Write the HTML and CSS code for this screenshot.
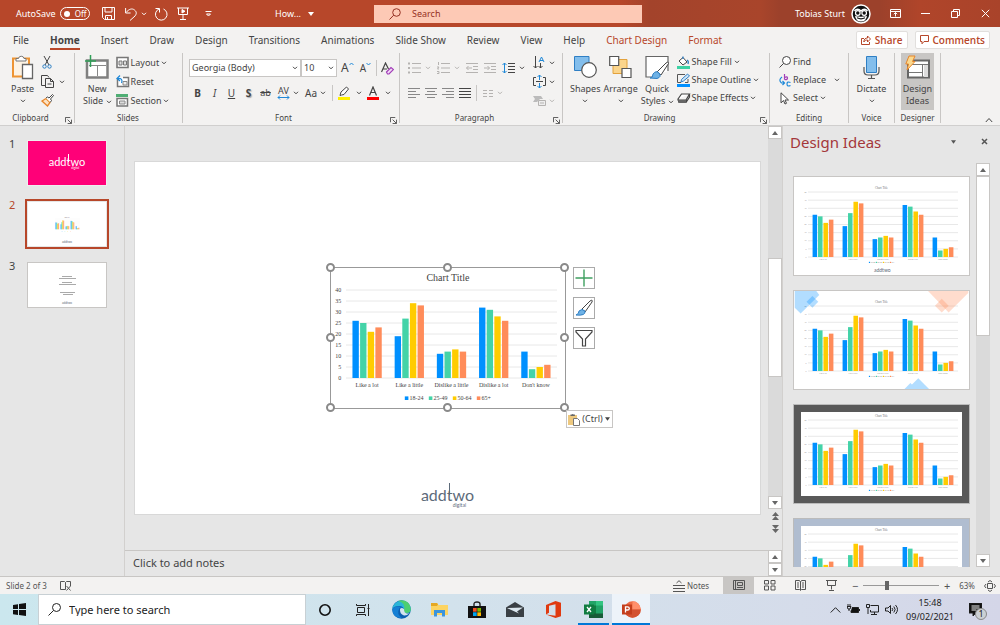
FILE: index.html
```html
<!doctype html>
<html lang="en">
<head>
<meta charset="utf-8">
<title>How... - PowerPoint</title>
<link rel="stylesheet" href="styles.css">
</head>
<body>

<!-- shared icons -->
<svg class="defs" width="0" height="0">
    <symbol id="chev" viewBox="0 0 6 4"><path d="M1 .8 3 2.8 5 .8" fill="none" stroke="currentColor"/></symbol>
    <symbol id="launch" viewBox="0 0 8 8"><path d="M.5 6V.5H6M3 3l4 4M7.5 3v4.5H3" fill="none" stroke="currentColor"/></symbol>
    <symbol id="up" viewBox="0 0 6 4"><path d="M0 4 3 0l3 4z" fill="currentColor"/></symbol>
    <symbol id="down" viewBox="0 0 6 4"><path d="M0 0h6L3 4z" fill="currentColor"/></symbol>
</svg>

<header class="titlebar">
    <div class="quick">
        <label class="autosave" for="autosave">AutoSave <input type="checkbox" id="autosave" role="switch"><span class="toggle">Off</span></label>
        <button class="save" aria-label="Save"><svg width="13" height="13" viewBox="0 0 13 13"><path d="M.5.5h12v12h-10l-2-2zM3 .5V5h7V.5M3.5 12.5v-4h6v4M5.5 10v2"/></svg></button>
        <button class="undo" aria-label="Undo"><svg width="12" height="14" viewBox="0 0 12 14"><path d="M.6 1v5h5M1 5.5C4 2 7 1 9.5 3s2 4 .5 6l-5 4.5"/></svg></button>
        <button class="undo-more" aria-label="Undo list"><svg width="6" height="4"><use href="#chev"/></svg></button>
        <button class="redo" aria-label="Redo"><svg width="14" height="14" viewBox="0 0 14 14"><path d="M1.5 1.5h4v4M5 2A5.8 5.8 0 1 0 9.5 2"/></svg></button>
        <button class="present" aria-label="Start slide show"><svg width="12" height="13" viewBox="0 0 12 13"><path d="M0 1h12M1.5 1v6.5h9V1M6 7.5V12M3 12.5h6"/><path d="M5 2.5 8 4.3 5 6z" fill="#fff"/></svg></button>
        <button class="customise" aria-label="Customise toolbar"><svg width="7" height="6" viewBox="0 0 7 6"><path d="M.5.5h6M1.500 3 3.500 5l2-2z"/></svg></button>
        <button class="filename">How... <svg width="6" height="4"><use href="#down"/></svg></button>
    </div>
    <label class="find-box" for="search">
        <svg width="12" height="12" viewBox="0 0 12 12"><circle cx="7.5" cy="4.5" r="3.8"/><path d="M4.7 7.2.5 11.5"/></svg>
        <input id="search" type="text" placeholder="Search">
    </label>
    <div class="account">
        <span class="user">Tobias Sturt</span>
        <svg class="avatar" width="20" height="20" viewBox="0 0 20 20"><circle cx="10" cy="10" r="9" fill="#111" stroke="#fff" stroke-width="1.5"/><path d="M3.500 7q3-3.500 6.500 0 3.500-3.500 6.500 0" stroke="#fff" stroke-width="1.500" fill="none"/><circle cx="6.800" cy="9" r="2.300" fill="#111" stroke="#fff" stroke-width="1.200"/><circle cx="13.200" cy="9" r="2.300" fill="#111" stroke="#fff" stroke-width="1.200"/><path d="M4 12q6 1.500 12 0-1 5.500-6 5.500T4 12" fill="#fff" stroke="none"/><path d="M6 13.800q4 2 8 0" stroke="#111" stroke-width="1.2" fill="none"/></svg>
        <div class="window-buttons">
            <button aria-label="Ribbon display"><svg width="11" height="9" viewBox="0 0 11 9"><path d="M.5.5h10v8H.5zM.5 2.5h10M5.5 7.5v-4M3.8 5.2l1.7-1.700 1.700 1.700"/></svg></button>
            <button aria-label="Minimise"><svg width="9" height="9" viewBox="0 0 9 9"><path d="M0 4.5h9"/></svg></button>
            <button aria-label="Restore"><svg width="9" height="9" viewBox="0 0 9 9"><path d="M.5 2.5h6v6h-6zM2.5 2.5v-2h6v6h-2"/></svg></button>
            <button aria-label="Close"><svg width="9" height="9" viewBox="0 0 9 9"><path d="m.8.8 7.4 7.4M8.2.8.8 8.2"/></svg></button>
        </div>
    </div>
</header>

<nav class="tabs">
    <a href="#file">File</a>
    <a href="#home" class="current">Home</a>
    <a href="#insert">Insert</a>
    <a href="#draw">Draw</a>
    <a href="#design">Design</a>
    <a href="#transitions">Transitions</a>
    <a href="#animations">Animations</a>
    <a href="#slideshow">Slide Show</a>
    <a href="#review">Review</a>
    <a href="#view">View</a>
    <a href="#help">Help</a>
    <a href="#chart-design" class="context">Chart Design</a>
    <a href="#format" class="context">Format</a>
    <div class="share">
        <button><svg width="10" height="10" viewBox="0 0 10 10"><path d="M3 3.5H.5v6h8V7M2.8 7c.2-3 1.7-4 3.7-4V1l3 3-3 3V5C5 5 3.8 5.5 2.8 7z"/></svg>Share</button>
        <button><svg width="9" height="10" viewBox="0 0 9 10"><path d="M.5.5h8v6H4L2 8.8V6.5H.5z"/></svg>Comments</button>
    </div>
</nav>

<section class="ribbon">
    <div class="group clipboard">
        <div class="tools">
            <button class="big">
                <svg width="23" height="25" viewBox="0 0 23 25"><path d="M2 3.5h16v18H2z" fill="#fdf3e4" stroke="#ee9433" stroke-width="2"/><path d="M5 6V3.5h2.5a2.8 2.8 0 0 1 5.5 0h2V6z" fill="#fff" stroke="#777"/><path d="M11.5 9.5h10v14h-10z" fill="#fff" stroke="#666" stroke-width="1.3"/></svg>
                Paste<svg width="6" height="4"><use href="#chev"/></svg>
            </button>
            <div class="stack">
                <button aria-label="Cut"><svg width="13" height="13" viewBox="0 0 13 13"><path d="M3 0l5 9M9 0 4 9" stroke="#444" fill="none"/><circle cx="3.5" cy="10.5" r="1.7" fill="none" stroke="#2b7fc4"/><circle cx="8.5" cy="10.5" r="1.7" fill="none" stroke="#2b7fc4"/></svg></button>
                <button aria-label="Copy"><svg width="13" height="13" viewBox="0 0 13 13"><path d="M4 10.5H.5V.5h6l1.5 2M4.5 3.5h5l3 3v6h-8zM9.5 3.5v3h3M6.5 9h4" stroke="#444" fill="none"/></svg><svg width="6" height="4"><use href="#chev"/></svg></button>
                <button aria-label="Format Painter"><svg width="13" height="13" viewBox="0 0 13 13"><path d="M1 7 5 4.5 9 8.5 6.5 12z" fill="#fce3c4" stroke="#e8862a" stroke-width="1.3"/><path d="m5 4 1.5-1 1.5 1L11.5.5l1 1L9.5 5l1 1.5-1.2 1.8" fill="#fff" stroke="#444"/></svg></button>
            </div>
        </div>
        <h2>Clipboard</h2><button class="launch" aria-label="Clipboard options"><svg width="7" height="7"><use href="#launch"/></svg></button>
    </div>

    <div class="group slides">
        <div class="tools">
            <button class="big">
                <svg width="24" height="25" viewBox="0 0 24 25"><path d="M2 5.5h20.5v17H2z" fill="#fff" stroke="#808080" stroke-width="2.5"/><path d="M4 10.5h17M12.5 10.5V21" stroke="#888"/><path d="M0 6h11M5.5 0v12" stroke="#2f9e57" stroke-width="1.5"/></svg>
                New<span>Slide <svg width="6" height="4"><use href="#chev"/></svg></span>
            </button>
            <div class="stack">
                <button><svg width="13" height="13" viewBox="0 0 13 13"><path d="M1 1.5h11v10H1z" fill="#fff" stroke="#777" stroke-width="1.6"/><path d="M3 5h3v4H3zM7.5 5h3v4h-3z" fill="#ddd" stroke="#777"/></svg>Layout <svg width="6" height="4"><use href="#chev"/></svg></button>
                <button><svg width="13" height="13" viewBox="0 0 13 13"><path d="M1.5 3v8.5h11v-9H7" fill="#fff" stroke="#777" stroke-width="1.5"/><path d="M7 6.5h4V10H7z" fill="#eee" stroke="#888"/><path d="M5.5 8q2-5-4-4.5M4 .5l-3 3 3 2.5" fill="none" stroke="#1e88d8" stroke-width="1.2"/></svg>Reset</button>
                <button><svg width="13" height="13" viewBox="0 0 13 13"><path d="M0 0h12v3H0z" fill="#4fae74"/><path d="M1 4.5h10.5V12H1z" fill="#fff" stroke="#777" stroke-width="1.5"/><path d="M3.5 7h5.5v3H3.5z" fill="#ddd" stroke="#888"/></svg>Section <svg width="6" height="4"><use href="#chev"/></svg></button>
            </div>
        </div>
        <h2>Slides</h2>
    </div>

    <div class="group font">
        <div class="tools rows">
            <div class="row">
                <select class="family" aria-label="Font"><option>Georgia (Body)</option></select>
                <select class="size" aria-label="Font size"><option>10</option></select>
                <button class="grow" aria-label="Grow font">A<svg width="5" height="4" viewBox="0 0 5 4"><path d="M.5 3 2.5 1l2 2" fill="none" stroke="#1e88d8"/></svg></button>
                <button class="grow small" aria-label="Shrink font">A<svg width="5" height="4" viewBox="0 0 5 4"><path d="m.5 1 2 2 2-2" fill="none" stroke="#1e88d8"/></svg></button>
                <i class="rule"></i>
                <button aria-label="Clear formatting"><svg width="13" height="13" viewBox="0 0 13 13"><path d="M.5 10 4.5 1l3 6M2 7h4" fill="none" stroke="#444" stroke-width="1.2"/><path d="M5.5 10 10 5.5l2.5 2L8 12H6.5z" fill="#f2d9f7" stroke="#a23fb8" stroke-width="1.2"/></svg></button>
            </div>
            <div class="row letters">
                <button><b>B</b></button>
                <button><i>I</i></button>
                <button><u>U</u></button>
                <button class="shadow"><b>S</b></button>
                <button class="strike"><s>ab</s></button>
                <button class="spacing" aria-label="Character spacing"><span>AV<svg width="13" height="5" viewBox="0 0 13 5"><path d="M1 2.5h11M3 .5l-2 2 2 2M10 .5l2 2-2 2" fill="none" stroke="#1e88d8"/></svg></span><svg width="6" height="4"><use href="#chev"/></svg></button>
                <button class="case">Aa <svg width="6" height="4"><use href="#chev"/></svg></button>
                <i class="rule"></i>
                <button class="colour" aria-label="Highlight"><svg width="12" height="14" viewBox="0 0 12 14"><path d="M0 11h12v3H0z" fill="#ffef00"/><path d="m3 6 5.5-5 2 2L6 8.5 3.5 9 2 9.5z" fill="#fff" stroke="#444"/></svg><svg width="6" height="4"><use href="#chev"/></svg></button>
                <button class="colour" aria-label="Font colour"><svg width="12" height="14" viewBox="0 0 12 14"><path d="M0 11h12v3H0z" fill="#f00"/><path d="M2.5 9.5 6 1l3.5 8.5M3.7 6.5h4.6" fill="none" stroke="#444" stroke-width="1.2"/></svg><svg width="6" height="4"><use href="#chev"/></svg></button>
            </div>
        </div>
        <h2>Font</h2><button class="launch" aria-label="Font options"><svg width="7" height="7"><use href="#launch"/></svg></button>
    </div>

    <div class="group paragraph">
        <div class="tools">
            <div class="rows">
                <div class="row">
                    <button class="off" aria-label="Bullets"><svg width="13" height="12" viewBox="0 0 13 12"><path d="M4 1.5h9M4 6h9M4 10.5h9"/><path d="M0 1.5h2M0 6h2M0 10.5h2" stroke-width="2"/></svg><svg width="6" height="4"><use href="#chev"/></svg></button>
                    <button class="off" aria-label="Numbering"><svg width="13" height="12" viewBox="0 0 13 12"><path d="M4 1.5h9M4 6h9M4 10.5h9M1.5 0v3M0 5h2L.5 7H2M0 9.5h2v2H0"/></svg><svg width="6" height="4"><use href="#chev"/></svg></button>
                    <button class="off indent" aria-label="Outdent"><svg width="12" height="12" viewBox="0 0 12 12"><path d="M0 1.5h12M7 4.5h5M7 7.5h5M0 10.5h12M.5 6H6M2.5 4l-2 2 2 2"/></svg></button>
                    <button class="off indent" aria-label="Indent"><svg width="12" height="12" viewBox="0 0 12 12"><path d="M0 1.5h12M7 4.5h5M7 7.5h5M0 10.5h12M0 6h5.5M3.5 4l2 2-2 2"/></svg></button>
                    <button class="dark" aria-label="Line spacing"><svg width="13" height="12" viewBox="0 0 13 12"><path d="M6 1.5h7M6 4.5h7M6 7.5h7M6 10.5h7"/><path d="M2.5 1v10M.5 3l2-2 2 2M.5 9l2 2 2-2" stroke="#1e88d8"/></svg><svg width="6" height="4"><use href="#chev"/></svg></button>
                </div>
                <div class="row aligns">
                    <button class="mid" aria-label="Left"><svg width="12" height="12" viewBox="0 0 12 12"><path d="M0 1.5h12M0 4.5h8M0 7.5h12M0 10.5h8"/></svg></button>
                    <button class="mid" aria-label="Centre"><svg width="12" height="12" viewBox="0 0 12 12"><path d="M0 1.5h12M2 4.5h8M0 7.5h12M2 10.5h8"/></svg></button>
                    <button class="mid" aria-label="Right"><svg width="12" height="12" viewBox="0 0 12 12"><path d="M0 1.5h12M4 4.5h8M0 7.5h12M4 10.5h8"/></svg></button>
                    <button class="dark" aria-label="Justify"><svg width="12" height="12" viewBox="0 0 12 12"><path d="M0 1.5h12M0 4.5h12M0 7.5h12M0 10.5h12"/></svg></button>
                    <i class="rule"></i>
                    <button class="off" aria-label="Columns"><svg width="10" height="12" viewBox="0 0 10 12"><path d="M0 3.5h4M6 3.5h4M0 6.5h4M6 6.5h4M0 9.5h4M6 9.5h4"/></svg><svg width="6" height="4"><use href="#chev"/></svg></button>
                </div>
            </div>
            <div class="stack">
                <button class="dark" aria-label="Text direction"><svg width="13" height="13" viewBox="0 0 13 13"><path d="M2.5 0v12M.5 10l2 2 2-2M7.5 7v5M5.5 10l2 2 2-2"/><path d="m6 6 2.5-5L11 6M7 4.5h3" stroke="#1e88d8"/></svg><svg width="6" height="4"><use href="#chev"/></svg></button>
                <button class="dark" aria-label="Align text"><svg width="13" height="13" viewBox="0 0 13 13"><path d="M3 2.5H.5v8H3M10 2.5h2.5v8H10M3 6.5h7"/><path d="M6.5 0v5M4.5 2l2-2 2 2M6.5 13V8M4.5 11l2 2 2-2" stroke="#1e88d8"/></svg><svg width="6" height="4"><use href="#chev"/></svg></button>
                <button class="off" aria-label="Convert to SmartArt"><svg width="13" height="13" viewBox="0 0 13 13"><path d="M0 2h8l2 3H7L4 8H0l2-3z" fill="#bbb" stroke="none"/><path d="M5.5 6.5h7v5h-7zM7 9h4" fill="#eee"/></svg><svg width="6" height="4"><use href="#chev"/></svg></button>
            </div>
        </div>
        <h2>Paragraph</h2><button class="launch" aria-label="Paragraph options"><svg width="7" height="7"><use href="#launch"/></svg></button>
    </div>

    <div class="group drawing">
        <div class="tools">
            <button class="big"><svg width="23" height="25" viewBox="0 0 23 25"><path d="M.5 1.5H15v14H.5z" fill="#83beec" stroke="#2f7fc4"/><circle cx="15" cy="15" r="7.3" fill="#fff" stroke="#555" stroke-width="1.2"/></svg>Shapes<svg width="6" height="4"><use href="#chev"/></svg></button>
            <button class="big"><svg width="23" height="25" viewBox="0 0 23 25"><path d="M4 4.5h14v14H4z" fill="#fbd58c" stroke="#e3a23c"/><path d="M.7 1.5h9v9h-9zM13 13.5h9v9h-9z" fill="#fff" stroke="#555" stroke-width="1.2"/></svg>Arrange<svg width="6" height="4"><use href="#chev"/></svg></button>
            <button class="big"><svg width="25" height="25" viewBox="0 0 25 25"><path d="M7 22H1V1.5h22V16" fill="#fff" stroke="#666" stroke-width="1.2"/><path d="m12 17 9-9q3-2 2.5.5L16 20z" fill="#fff" stroke="#444"/><path d="M5 23q3 0 3-4 3-4 6-1 3 4-2 5.5z" fill="#6eb2e6" stroke="#2f7fc4"/></svg>Quick<span>Styles <svg width="6" height="4"><use href="#chev"/></svg></span></button>
            <div class="stack">
                <button><svg width="13" height="13" viewBox="0 0 13 13"><path d="M0 10h13v3H0z" fill="#3dd2a5"/><path d="m2 5 4-3.5L10 6 6 9z" fill="#fff" stroke="#444"/><path d="M6 3V.5M10 4q2 1 1 4" stroke="#2f7fc4" fill="none" stroke-width="1.3"/></svg>Shape Fill <svg width="6" height="4"><use href="#chev"/></svg></button>
                <button><svg width="13" height="13" viewBox="0 0 13 13"><path d="M0 10h13v3H0z" fill="#0090ff"/><path d="M8 .5H.5v8H4M11 5v3.5H8" fill="none" stroke="#555"/><path d="m4 8 .5-2.5L10.5 0l2 2-6 5z" fill="#cfe6f8" stroke="#2f7fc4"/></svg>Shape Outline <svg width="6" height="4"><use href="#chev"/></svg></button>
                <button><svg width="13" height="13" viewBox="0 0 13 13"><path d="m1 7 3.5-5h8L9 8H1zM1 7l1 3.5h7L12.5 5V2M9 8v2.5" fill="#fff" stroke="#444" stroke-width="1.2"/><path d="m1 8 1 3h7V8z" fill="#666"/></svg>Shape Effects <svg width="6" height="4"><use href="#chev"/></svg></button>
            </div>
        </div>
        <h2>Drawing</h2><button class="launch" aria-label="Drawing options"><svg width="7" height="7"><use href="#launch"/></svg></button>
    </div>

    <div class="group editing">
        <div class="tools">
            <div class="stack">
                <button><svg width="12" height="13" viewBox="0 0 12 13"><circle cx="7.5" cy="4.5" r="4" fill="#fff" stroke="#444"/><path d="m4.5 7.5-4 4" stroke="#444"/></svg>Find</button>
                <button><svg width="12" height="13" viewBox="0 0 12 13"><path d="M5.5 0v5.5M5.5 3.5q3-1.5 3 .5t-3 1.5" fill="none" stroke="#a23fb8" stroke-width="1.2"/><path d="M3 3Q-1 6 2.5 9H5M3.5 7 5.5 9l-2 2M11.5 8.5Q8 7 8 10t3.5 1.5" fill="none" stroke="#1e88d8" stroke-width="1.2"/></svg>Replace <svg class="far" width="6" height="4"><use href="#chev"/></svg></button>
                <button><svg width="12" height="13" viewBox="0 0 12 13"><path d="M2 .8v10l2.500-2.300L6 12l1.500-.7L6 8h3.500z" fill="#fff" stroke="#444"/></svg>Select <svg width="6" height="4"><use href="#chev"/></svg></button>
            </div>
        </div>
        <h2>Editing</h2>
    </div>

    <div class="group voice">
        <div class="tools">
            <button class="big"><svg width="17" height="25" viewBox="0 0 17 25"><path d="M3.5 1.5h10v16h-10z" fill="#83beec" stroke="#2f7fc4"/><path d="M1 12v4q0 4 4 4h7q4 0 4-4v-4M8.5 20v3M5 23.5h7" fill="none" stroke="#555" stroke-width="1.2"/></svg>Dictate<svg width="6" height="4"><use href="#chev"/></svg></button>
        </div>
        <h2>Voice</h2>
    </div>

    <div class="group designer">
        <div class="tools">
            <button class="big pressed"><svg width="25" height="25" viewBox="0 0 25 25"><path d="M3 5.5h21v17H3z" fill="#fff" stroke="#666" stroke-width="2"/><path d="M4 9.5h19M17.5 9.5V22M4 17.5h13" stroke="#777"/><path d="M19 10h4v12h-4z" fill="#ddd"/><path d="M4 1h6L7.5 6.5H10L2 15l1.5-6H.8z" fill="#fbd98f" stroke="#e8862a"/></svg>Design<span>Ideas</span></button>
        </div>
        <h2>Designer</h2>
    </div>
    <button class="collapse" aria-label="Collapse ribbon"><svg width="8" height="6" viewBox="0 0 8 6"><path d="m.8 5 3.2-3.5L7.2 5" fill="none" stroke="#444"/></svg></button>
</section>

<main class="workspace">
    <ol class="thumbs">
        <li><span>1</span><a href="#slide1" class="thumb pink"><b class="logo"><i>add<em>t</em>wo</i><small>digital</small></b></a></li>
        <li class="selected"><span>2</span><a href="#slide2" class="thumb"><svg class="chart" data-chart="slide"></svg><b class="logo tiny"><i>add<em>t</em>wo</i></b></a></li>
        <li><span>3</span><a href="#slide3" class="thumb"><svg width="78" height="44" viewBox="0 0 78 44"><path d="M34 13.5h10M31 15.5h17M34 19.5h10M31 21.5h17M32 29.5h15M35 31.5h10" stroke="#aaa"/></svg><b class="logo tiny"><i>add<em>t</em>wo</i></b></a></li>
    </ol>

    <div class="editor">
        <div class="canvas">
            <div class="slide">
                <div class="object">
                    <svg class="chart" data-chart="slide"></svg>
                    <i class="handle nw"></i><i class="handle n"></i><i class="handle ne"></i>
                    <i class="handle w"></i><i class="handle e"></i>
                    <i class="handle sw"></i><i class="handle s"></i><i class="handle se"></i>
                    <div class="chart-tools">
                        <button aria-label="Chart elements"><svg width="18" height="18" viewBox="0 0 18 18"><path d="M9 .5v17M.5 9h17" stroke="#3fa060" stroke-width="1.4"/></svg></button>
                        <button aria-label="Chart styles"><svg width="18" height="18" viewBox="0 0 18 18"><path d="m7 10 8-8q3-2 2 1l-7 10z" fill="#fff" stroke="#444"/><path d="M1 16q3-1 3-4 3-3 6 0 1 5-9 4z" fill="#6eb2e6" stroke="#2f7fc4"/></svg></button>
                        <button aria-label="Chart filters"><svg width="18" height="18" viewBox="0 0 18 18"><path d="M1 1.5h16V3l-6.5 7v7h-3v-7L1 3z" fill="#fff" stroke="#444" stroke-width="1.2"/></svg></button>
                    </div>
                    <button class="paste-options"><svg width="12" height="13" viewBox="0 0 12 13"><path d="M0 2h9v10H0z" fill="#edc87e"/><path d="M2.5 3V1.5h1.3a1 1 0 0 1 1.8 0h1.3V3z" fill="#666"/><path d="M5.5 5.5h4l2 2v5h-6z" fill="#fff" stroke="#777"/></svg>(Ctrl) <svg width="5" height="4"><use href="#down"/></svg></button>
                </div>
                <b class="logo"><i>add<em>t</em>wo</i><small>digital</small></b>
            </div>
        </div>
        <div class="vscroll">
            <button aria-label="Scroll up"><svg width="6" height="4"><use href="#up"/></svg></button>
            <div class="track"><i></i></div>
            <button aria-label="Scroll down"><svg width="6" height="4"><use href="#down"/></svg></button>
            <button class="bare" aria-label="Previous slide"><svg width="7" height="8" viewBox="0 0 7 8"><path d="M0 4 3.5 0 7 4zM0 8l3.5-4L7 8z" fill="#666"/></svg></button>
            <button class="bare" aria-label="Next slide"><svg width="7" height="8" viewBox="0 0 7 8"><path d="M0 0h7L3.5 4zM0 4h7L3.5 8z" fill="#666"/></svg></button>
        </div>
        <textarea class="notes" aria-label="Notes" placeholder="Click to add notes"></textarea>
        <div class="vscroll notes-scroll">
            <button aria-label="Notes up"><svg width="6" height="4"><use href="#up"/></svg></button>
            <button aria-label="Notes down"><svg width="6" height="4"><use href="#down"/></svg></button>
        </div>
    </div>

    <aside class="ideas">
        <header>
            <h1>Design Ideas</h1>
            <button aria-label="Pane options"><svg width="5" height="4"><use href="#down"/></svg></button>
            <button aria-label="Close pane"><svg width="7" height="7" viewBox="0 0 7 7"><path d="m1 1 5 5M6 1 1 6" stroke="#555" stroke-width="1.5"/></svg></button>
        </header>
        <div class="list">
            <div class="cards">
                <a href="#idea1" class="idea"><svg class="chart" data-chart="idea"></svg><b class="logo tiny"><i>add<em>t</em>wo</i></b></a>
                <a href="#idea2" class="idea"><svg class="chart" data-chart="idea"></svg>
                    <svg class="shapes" viewBox="0 0 177 100">
                        <g fill="#0090ff" fill-opacity=".3"><path d="M0 0h22l3 4L6 23l-6-6z"/><path d="m18 5 6 6-6 6-6-6z"/><path d="m112 100 6-6 6 6zM115 100l11-11 11 11z"/></g>
                        <g fill="#ff8c5a" fill-opacity=".3"><path d="M136 0h41v2l-20 20z"/><path d="m150 8 7 7-7 7-7-7z"/></g>
                    </svg></a>
                <a href="#idea3" class="idea framed"><svg class="chart" data-chart="idea"></svg></a>
                <a href="#idea4" class="idea framed blue"><svg class="chart" data-chart="idea"></svg></a>
            </div>
            <div class="vscroll">
                <button aria-label="Scroll up"><svg width="6" height="4"><use href="#up"/></svg></button>
                <div class="track"><i></i></div>
                <button aria-label="Scroll down"><svg width="6" height="4"><use href="#down"/></svg></button>
            </div>
        </div>
    </aside>
</main>

<footer class="status">
    <span class="count">Slide 2 of 3</span>
    <button aria-label="Spelling"><svg width="12" height="11" viewBox="0 0 12 11"><path d="M5.5 9.5h-5v-8h4l1 1 1-1h4V6M5.5 2.5v7M6.5 6l4 4.5M10.5 6l-4 4.5"/></svg></button>
    <div class="views">
        <button class="note-toggle"><svg width="12" height="12" viewBox="0 0 12 12"><path d="M0 5.5h12M0 8.5h12M0 11.5h12M3.5 3 6 .7 8.5 3"/></svg>Notes</button>
        <button class="view on" aria-label="Normal"><svg width="12" height="11" viewBox="0 0 12 11"><path d="M.5.5h11v9H.5zM2.5.5v9M4.5 2.5h5v3h-5zM4 7.5h6"/></svg></button>
        <button class="view" aria-label="Slide sorter"><svg width="12" height="11" viewBox="0 0 12 11"><path d="M.5.5h4V4h-4zM7 .5h4V4H7zM.5 6h4v4h-4zM7 6h4v4H7z"/></svg></button>
        <button class="view" aria-label="Reading view"><svg width="12" height="11" viewBox="0 0 12 11"><path d="M5.5 2 4.5.5h-4v9h4l1 1 1-1h4v-9h-4zM5.5 2v8M2 3h2M2 5h2M2 7h2M7 3h2M7 5h2M7 7h2"/></svg></button>
        <button class="view" aria-label="Slide show"><svg width="12" height="11" viewBox="0 0 12 11"><path d="M0 .5h11M1.5.5v5h8v-5M5.5 5.5v4M3 10.5h5"/></svg></button>
        <button class="step" aria-label="Zoom out">−</button>
        <input type="range" aria-label="Zoom" min="0" max="100" value="30">
        <button class="step" aria-label="Zoom in">+</button>
        <span class="percent">63%</span>
        <button aria-label="Fit"><svg width="12" height="12" viewBox="0 0 12 12"><path d="M3.5 3.5h5v5h-5zM4 2l2-1.5L8 2M4 10l2 1.5L8 10M2 4 .5 6 2 8M10 4l1.5 2L10 8"/></svg></button>
    </div>
</footer>

<nav class="taskbar">
    <button class="start" aria-label="Start"><svg width="13" height="13" viewBox="0 0 13 13"><path d="M0 2l5-.8V6H0zM6 1l7-1v6H6zM0 7h5v5l-5-.8zM6 7h7v6l-7-1z" fill="#111"/></svg></button>
    <label class="type-here" for="winsearch"><svg width="13" height="13" viewBox="0 0 13 13"><circle cx="8.5" cy="4.5" r="4"/><path d="M5.5 7.5.5 12.5"/></svg><input id="winsearch" type="text" placeholder="Type here to search"></label>
    <div class="apps">
        <button aria-label="Cortana"><svg width="14" height="14" viewBox="0 0 14 14"><circle cx="7" cy="7" r="5.2" fill="none" stroke="#111" stroke-width="1.6"/></svg></button>
        <button aria-label="Task view"><svg width="14" height="14" viewBox="0 0 14 14"><path d="M1.5 4.5h7v5h-7zM.5 1v1.5h9V1M.5 13v-1.5h9V13M12.5 1v12M11.5 5.5h2" fill="none" stroke="#222"/></svg></button>
        <button aria-label="Edge"><svg width="19" height="19" viewBox="0 0 19 19"><circle cx="9.5" cy="9.5" r="9.3" fill="#0c5fb0"/><path d="M.3 9A9.3 9.3 0 0 1 18.8 9q0 4-4.3 4-3.5-.3-2.5-2.5Q12 6 7 6 2 6.2.3 9z" fill="#2bb5d8"/><path d="M9 .3q9 0 9.8 8.7 0 4-4.3 4-3-.2-2.5-2.5 2-8-6-9.5z" fill="#4dcf70"/><path d="M7.5 8Q4 14 10 18 1 18 .4 10.5.6 7 5 6.5q5-.5 6 2-2-1.5-3.5-.5z" fill="#1580d4"/><path d="M8 9q1.5-2 4 0 0 4 3 4.5 2 .2 2.8-.7Q15 16 12 15.5 7.5 14 8 9z" fill="#d3e3ee"/></svg></button>
        <button aria-label="Explorer"><svg width="17" height="15" viewBox="0 0 17 15"><path d="M0 1h6l1.5 2H17v10H0z" fill="#fcd462"/><path d="M0 1h6l1 1.5L6 4H0z" fill="#e5a823"/><path d="M3 14.5V8h11v6.5h-3V11H6v3.5z" fill="#3a94dd"/></svg></button>
        <button aria-label="Store"><svg width="18" height="18" viewBox="0 0 18 18"><path d="M6 5V3q0-2 3-2t3 2v2" fill="none" stroke="#222" stroke-width="1.4"/><path d="M0 5h18v12H0z" fill="#111"/><path d="M5 7h3.7v3.7H5z" fill="#f25022"/><path d="M9.3 7H13v3.7H9.3z" fill="#7fba00"/><path d="M5 11.3h3.7V15H5z" fill="#00a4ef"/><path d="M9.3 11.3H13V15H9.3z" fill="#ffb900"/></svg></button>
        <button aria-label="Mail"><svg width="18" height="15" viewBox="0 0 18 15"><path d="M0 5.5 9 0l9 5.5V15H0z" fill="#3a4045"/><path d="m1 6 16-.5-6 4 2 2z" fill="#dce7ef"/></svg></button>
        <button aria-label="Office"><svg width="15" height="17" viewBox="0 0 15 17"><path d="M0 4 9.5 0 15 1.8v13.4L9.5 17 0 13.5l9.5 1.2V3.2L3 4.8v7L0 13.5z" fill="#e03a10"/></svg></button>
        <button class="running" aria-label="Excel"><svg width="19" height="17" viewBox="0 0 19 17"><path d="M5 0h14v17H5z" fill="#21a366"/><path d="M5 4.5h7V13H5z" fill="#107c41"/><path d="M12 0h7v4.5h-7z" fill="#33c481"/><path d="M5 12.5h14V17H5z" fill="#185c37"/><path d="M0 3.5h10v10H0z" fill="#107c41"/><path d="m3 6 4 5M7 6l-4 5" stroke="#fff" stroke-width="1.3"/></svg></button>
        <button class="running active" aria-label="PowerPoint"><svg width="19" height="17" viewBox="0 0 19 17"><circle cx="10.5" cy="8.5" r="8.3" fill="#ed6c47"/><path d="M10.5 8.5V.2a8.3 8.3 0 0 1 8.3 8.3z" fill="#ff8f6b"/><path d="M2.2 8.5h16.6a8.3 8.3 0 0 1-16.6 0z" fill="#d35230"/><path d="M0 3.5h10v10H0z" fill="#c43e1c"/><path d="M3.5 11.5V5.8h2q1.8 0 1.8 1.6T5.5 9h-2" fill="none" stroke="#fff" stroke-width="1.3"/></svg></button>
    </div>
    <div class="tray">
        <button aria-label="Hidden icons"><svg width="11" height="6" viewBox="0 0 11 6"><path d="m.7 5.5 4.8-4.8 4.8 4.8"/></svg></button>
        <button aria-label="Battery"><svg width="13" height="11" viewBox="0 0 13 11"><path d="M5 3.500h6.500v5H4V6.500" class="solid"/><path d="M12.500 5v2M1 0v2M3 0v2M0 2.500h4L3 5H1zM2 5v2"/></svg></button>
        <button aria-label="Network"><svg width="13" height="11" viewBox="0 0 13 11"><path d="M4.5 1.5h8v6.5h-8V6M8.5 8v2M5 10.5h6M.5.5h3v3h-3zM2 4v6"/></svg></button>
        <button aria-label="Volume"><svg width="13" height="11" viewBox="0 0 13 11"><path d="M.5 4v3H3l2.5 2.5v-8L3 4zM7 4q1.5 1.5 0 3M8.8 2.5q2.7 3 0 6M10.5 1q4 4.5 0 9"/></svg></button>
        <time>15:48<br>09/02/2021</time>
        <button class="alerts" aria-label="Notifications"><svg width="13" height="13" viewBox="0 0 13 13"><path d="M0 0h13v10H7l-3 3v-3H0z" class="solid"/><path d="M2.500 3h8M2.500 5h8M2.500 7h5" class="lines"/></svg><span class="badge">1</span></button>
    </div>
</nav>

<script src="charts.js"></script>
</body>
</html>
```
FILE: styles.css
```css
* {
    box-sizing: border-box;
}
html, body {
    height: 100%;
}
body {
    margin: 0;
    display: flex;
    flex-direction: column;
    overflow: hidden;
    background: #e6e6e6;
    color: #444;
    font: 9px/12px "Noto Sans", "Open Sans", sans-serif;
}
button, input, select, textarea {
    margin: 0;
    padding: 0;
    border: 0;
    background: none;
    color: inherit;
    font: inherit;
}
button {
    display: flex;
    align-items: center;
    justify-content: center;
}
a {
    color: inherit;
    text-decoration: none;
}
svg {
    flex: none;
}
.defs {
    position: absolute;
}

/* title bar */
.titlebar {
    flex: none;
    height: 27px;
    display: grid;
    grid-template-columns: 374fr 268fr 358fr;
    align-items: center;
    background: linear-gradient(90deg, #b7472a 62%, #a3432b 65%, #a9452b 76%, #9c412b 78%, #9c412b 88%, #b0452a 92%, #a9432a);
    color: #fff;
}
.titlebar svg {
    fill: none;
    stroke: currentColor;
}
.titlebar use {
    stroke: none;
}
.quick {
    display: flex;
    align-items: center;
    padding-left: 16px;
}
.autosave {
    display: flex;
    align-items: center;
    gap: 4px;
    margin-right: 12px;
}
.autosave input {
    position: absolute;
    opacity: 0;
}
.toggle {
    display: flex;
    align-items: center;
    gap: 5px;
    width: 30px;
    height: 13px;
    padding-left: 3px;
    border: 1px solid #fff;
    border-radius: 7px;
    font-size: 8px;
}
.toggle:before {
    content: "";
    width: 6px;
    height: 6px;
    border-radius: 3px;
    background: #fff;
}
.save {
    margin-right: 10px;
}
.undo-more {
    margin: 0 7px 0 4px;
}
.present {
    margin: 0 16px 0 9px;
}
.filename {
    margin-left: auto;
    margin-right: 60px;
    gap: 7px;
}
.find-box {
    display: flex;
    align-items: center;
    gap: 11px;
    height: 18px;
    padding-left: 15px;
    background: #fdc9b5;
    color: #953023;
}
.find-box input {
    flex: 1;
    min-width: 0;
}
::placeholder {
    color: inherit;
    opacity: 1;
}
.account {
    display: flex;
    align-items: center;
    justify-content: flex-end;
}
.account .avatar {
    margin: 0 9px 0 6px;
}
.window-buttons button {
    width: 30px;
    height: 27px;
}
.window-buttons {
    display: flex;
}

/* ribbon tabs */
.tabs {
    flex: none;
    height: 25px;
    display: flex;
    align-items: center;
    gap: 21px;
    padding: 0 10px 0 13px;
    background: #f3f2f1;
    font-size: 10px;
    line-height: 20px;
}
.tabs .current {
    border-bottom: 2px solid #b7472a;
    line-height: 16px;
    padding-top: 2px;
    font-weight: bold;
}
.tabs .context {
    color: #b7472a;
}
.share {
    display: flex;
    gap: 7px;
    margin-left: auto;
}
.share button {
    height: 18px;
    padding: 0 4px;
    gap: 4px;
    border: 1px solid #e1dfdd;
    border-radius: 2px;
    background: #fff;
    color: #b7472a;
    font-family: "Open Sans", sans-serif;
    font-weight: 600;
}
.share svg {
    fill: none;
    stroke: #b7472a;
}

/* ribbon */
.ribbon {
    flex: none;
    display: flex;
    height: 74px;
    padding-top: 1px;
    background: #f3f2f1;
    border-bottom: 1px solid #d0cfce;
}
.group {
    position: relative;
    flex: none;
    height: 70px;
    border-right: 1px solid #c8c6c4;
}
.group h2 {
    margin: 0;
    font-size: 8px;
    line-height: 16px;
    font-weight: normal;
    text-align: center;
}
.tools {
    display: flex;
    height: 57px;
}
.launch {
    position: absolute;
    right: 2px;
    bottom: -1px;
}
.big {
    flex-direction: column;
    justify-content: flex-start;
    padding-top: 2px;
    height: 57px;
}
.big > svg:first-child {
    margin-bottom: 3px;
}
.big > svg:last-child {
    margin-top: 4px;
}
.big svg, .stack svg {
    overflow: visible;
}
.stack {
    display: flex;
    flex-direction: column;
    align-items: flex-start;
}
.stack button {
    height: 19px;
    gap: 2px;
    white-space: nowrap;
}
.drawing .stack button, .editing .stack button {
    height: 18px;
}
.rows {
    display: flex;
    flex-direction: column;
    padding-top: 6px;
    gap: 7px;
}
.row {
    display: flex;
    align-items: center;
    height: 18px;
}
.rule {
    width: 1px;
    height: 16px;
    background: #c8c6c4;
}

.clipboard {
    width: 75px;
}
.clipboard .tools {
    padding-left: 11px;
    gap: 7px;
}
.clipboard h2 {
    padding-right: 13px;
}
.clipboard .stack button {
    gap: 5px;
}
.slides {
    width: 108px;
}
.slides .tools {
    padding-left: 8px;
    gap: 4px;
}
.slides h2 {
    padding-right: 1px;
}
.font {
    width: 217px;
}
.font .tools {
    padding-left: 6px;
}
.font h2 {
    padding-right: 15px;
}
.font select {
    height: 18px;
    padding-left: 2px;
    border: 1px solid #c8c6c4;
    appearance: none;
    background: #fff url('data:image/svg+xml,<svg xmlns="http://www.w3.org/2000/svg" width="6" height="4"><path d="M1 .8 3 2.8 5 .8" fill="none" stroke="%23444"/></svg>') no-repeat right 2px center;
}
.family {
    width: 112px;
}
.size {
    width: 36px;
}
.grow {
    align-items: flex-start;
    margin-left: 4px;
    font-size: 12px;
}
.grow.small {
    margin: 0 5px 0 6px;
    font-size: 10px;
}
.rule + button {
    margin-left: 4px;
}
.letters button {
    min-width: 17px;
    font-size: 10px;
}
.letters .strike {
    font-size: 9px;
}
.letters .spacing {
    gap: 3px;
    margin-left: 3px;
}
.spacing span {
    display: flex;
    flex-direction: column;
    align-items: center;
    font-size: 9px;
    line-height: 9px;
}
.letters .case {
    gap: 3px;
    margin: 0 6px;
}
.letters .colour {
    gap: 6px;
    margin-left: 5px;
}
.shadow {
    text-shadow: 1px 1px 1px #aaa;
}

.paragraph {
    width: 163px;
}
.paragraph .tools {
    padding-left: 8px;
    gap: 8px;
}
.paragraph h2 {
    padding-right: 13px;
}
.paragraph .row {
    gap: 6px;
}
.paragraph .row button {
    gap: 4px;
}
.paragraph .aligns {
    gap: 5px;
}
.paragraph svg {
    fill: none;
    stroke: currentColor;
}
.paragraph .launch svg, .paragraph svg use {
    stroke: none;
}
.paragraph .stack button {
    gap: 3px;
}
.aligns .rule + button {
    margin-left: 1px;
}
.off {
    color: #b5b3b1;
}
.mid {
    color: #888;
}

.drawing {
    width: 207px;
}
.drawing .tools {
    padding-left: 7px;
    gap: 3px;
}
.drawing h2 {
    padding-right: 13px;
}
.editing {
    width: 79px;
}
.editing .tools {
    padding-left: 9px;
}
.far {
    margin-left: 6px;
}
.voice {
    width: 46px;
}
.voice .tools, .designer .tools {
    justify-content: center;
}
.designer {
    width: 46px;
}
.pressed {
    width: 33px;
    background: #c8c6c4;
}
.collapse {
    margin: auto 7px 2px auto;
}

/* workspace */
.workspace {
    flex: 1;
    min-height: 0;
    display: flex;
    background: #e6e6e6;
}
.thumbs {
    flex: none;
    width: 125px;
    margin: 0;
    padding: 12px 0 0;
    border-right: 1px solid #d2d0ce;
    list-style: none;
}
.thumbs li {
    display: flex;
    gap: 12px;
    height: 61px;
    padding-left: 9px;
    font-size: 11px;
}
.thumbs li > span {
    width: 7px;
}
.thumb {
    position: relative;
    width: 78px;
    height: 44px;
    margin-top: 3px;
    display: grid;
    place-items: center;
    background: #fff;
    outline: 1px solid #c8c6c4;
}
.thumb .chart {
    width: 28px;
    height: 17px;
}
.selected {
    color: #b7472a;
}
.selected .thumb {
    outline: 2px solid #b7472a;
    outline-offset: 1px;
}
.pink {
    background: #ff0078;
    color: #fff;
    outline-color: #eee;
}

/* logo scales with its font size */
.logo {
    color: #5d6b7a;
    font: 16px/1 Lato, "Noto Sans", sans-serif;
    white-space: nowrap;
    text-align: center;
}
.logo i, .logo em {
    font-style: normal;
}
.logo em {
    position: relative;
}
/* the long stem of the t */
.logo em:before {
    content: "";
    position: absolute;
    left: 30%;
    bottom: 50%;
    width: 8%;
    min-width: 1px;
    height: 60%;
    background: currentColor;
}
.tiny em:before {
    display: none;
}
.logo small {
    display: block;
    margin-left: 45%;
    font-size: 5px;
    line-height: 5px;
}
.pink .logo {
    color: #fff;
    font-size: 11px;
}
.pink small {
    font-size: 3px;
    line-height: 3px;
}
.tiny {
    position: absolute;
    bottom: 2px;
    font-size: 3px;
}

.editor {
    flex: 1;
    min-width: 0;
    display: grid;
    grid-template-columns: 1fr 14px;
    grid-template-rows: 1fr 26px;
    border-right: 1px solid #d2d0ce;
}
.canvas {
    padding: 36px 8px 0 10px;
}
.slide {
    position: relative;
    display: grid;
    place-items: center;
    aspect-ratio: 625 / 352;
    background: #fff;
    outline: 1px solid #d8d8d8;
}
.slide > .logo {
    position: absolute;
    bottom: 6px;
}
.object {
    position: relative;
    border: 1px solid #999;
}
.object .chart {
    display: block;
    width: 234px;
    height: 140px;
}
.handle {
    position: absolute;
    width: 9px;
    height: 9px;
    margin: -5px;
    border: 2px solid #8a8a8a;
    border-radius: 5px;
    background: #fff;
}
.nw, .n, .ne {
    top: 0;
}
.w, .e {
    top: 50%;
}
.sw, .s, .se {
    top: 100%;
}
.nw, .w, .sw {
    left: 0;
}
.n, .s {
    left: 50%;
}
.ne, .e, .se {
    left: 100%;
}
.chart-tools {
    position: absolute;
    top: -1px;
    left: calc(100% + 8px);
    display: grid;
    gap: 8px;
}
.chart-tools button {
    width: 22px;
    height: 22px;
    border: 1px solid #aaa;
    background: #fff;
}
.paste-options {
    position: absolute;
    top: calc(100% + 2px);
    left: calc(100% + 1px);
    width: 47px;
    height: 18px;
    gap: 2px;
    border: 1px solid #c8c6c4;
    background: #fff;
}
.notes {
    display: block;
    padding: 5px 8px;
    border-top: 1px solid #c8c6c4;
    outline: 0;
    resize: none;
    font-size: 11px;
    line-height: 14px;
}

.vscroll {
    width: 14px;
    display: flex;
    flex-direction: column;
}
.vscroll button {
    flex: none;
    height: 13px;
    border: 1px solid #c8c6c4;
    background: #fff;
    color: #666;
}
.vscroll .bare {
    border: 0;
    background: none;
}
.editor .vscroll:not(.notes-scroll) {
    padding-bottom: 15px;
}
.track {
    flex: 1;
    display: flex;
    flex-direction: column;
    background: #dadada;
}
.track i {
    margin-top: 119px;
    height: 119px;
    border: 1px solid #c8c6c4;
    background: #fff;
}

/* design ideas pane */
.ideas {
    flex: none;
    width: 217px;
    display: flex;
    flex-direction: column;
    padding: 0 10px 9px 7px;
}
.ideas header {
    flex: none;
    display: flex;
    align-items: center;
    gap: 25px;
    height: 37px;
    padding-bottom: 6px;
    color: #555;
}
.ideas h1 {
    margin: 0 auto 0 0;
    color: #a4373a;
    font: 15px/20px "Noto Sans", "Open Sans", sans-serif;
}
.ideas header button:last-child {
    margin-right: 2px;
}
.list {
    flex: 1;
    min-height: 0;
    display: flex;
    justify-content: space-between;
}
.cards {
    padding: 13px 0 0 3px;
    overflow: hidden;
}
.idea {
    position: relative;
    display: block;
    width: 177px;
    height: 100px;
    margin-bottom: 14px;
    border: 1px solid #c8c6c4;
    background: #fff;
}
.idea .chart, .shapes {
    position: absolute;
    inset: 0;
    width: 100%;
    height: 100%;
}
.idea .tiny {
    left: 80px;
    bottom: 2px;
    font-size: 5px;
}
.framed {
    border-color: #bbb;
    background: linear-gradient(#fff, #fff) center / 161px 84px no-repeat #595959;
}
.blue {
    background-color: #b0bdd0;
}
.ideas .vscroll i {
    margin-top: 0;
    height: 160px;
}

/* charts */
.chart {
    font-family: "Liberation Serif", serif;
    fill: #444;
}
.chart line {
    stroke: #e8e8e8;
}
.idea .chart {
    fill: #777;
}

/* status bar */
.status {
    flex: none;
    display: flex;
    align-items: center;
    height: 18px;
    padding: 0 4px 0 6px;
    border-top: 1px solid #c8c6c4;
    background: #f3f2f1;
    color: #555;
    font-size: 8px;
}
.status svg {
    fill: none;
    stroke: #555;
}
.count {
    margin-right: 13px;
}
.views {
    display: flex;
    align-items: center;
    margin-left: auto;
}
.note-toggle {
    gap: 2px;
    margin-right: 14px;
}
.view {
    width: 31px;
    height: 17px;
}
.on {
    background: #c8c6c4;
}
.step {
    width: 16px;
    font-size: 11px;
}
.views input {
    width: 76px;
    height: 12px;
    appearance: none;
    background: linear-gradient(#999, #999) center / 100% 1px no-repeat;
}
.views input::-webkit-slider-thumb {
    appearance: none;
    width: 4px;
    height: 9px;
    background: #666;
}
.percent {
    margin: 0 9px 0 4px;
}

/* taskbar */
.taskbar {
    flex: none;
    display: flex;
    height: 31px;
    background: linear-gradient(90deg, #cbe7ee, #d2e2ec 45%, #d5dcea 80%, #d4d6e8);
    color: #222;
}
.start {
    width: 38px;
}
.type-here {
    display: flex;
    align-items: center;
    gap: 8px;
    width: 268px;
    padding-left: 9px;
    border: 1px solid #c8d0d4;
    background: #fff;
    font-size: 11px;
}
.type-here svg, .tray svg {
    fill: none;
    stroke: #222;
}
.type-here input {
    flex: 1;
}
.apps {
    display: flex;
}
.apps button {
    width: 38px;
}
.running {
    background: linear-gradient(#0078d7, #0078d7) bottom / 31px 2px no-repeat;
}
.apps .active {
    background: linear-gradient(#0078d7, #0078d7) bottom / 100% 2px no-repeat #edf3f9;
}
.apps .running {
    margin-left: 2px;
}
.apps .running + .running {
    margin-left: 0;
}
.tray {
    display: flex;
    align-items: center;
    gap: 6px;
    margin-left: auto;
    padding-right: 18px;
}
.tray time {
    margin: 0 9px 0 2px;
    line-height: 14px;
    text-align: center;
}
.tray .solid {
    fill: #111;
}
.tray .lines {
    stroke: #eee;
}
.alerts {
    position: relative;
}
.badge {
    position: absolute;
    left: 6px;
    top: 5px;
    width: 12px;
    height: 12px;
    border: 1px solid #888;
    border-radius: 6px;
    background: #ccd0d4;
    line-height: 10px;
}
```
FILE: charts.js
```js
(function()
{
    var categories = [ 'Like a lot', 'Like a little', 'Dislike a little', 'Dislike a lot', "Don't know" ];
    var series = [
        { name: '18-24', colour: '#0090ff', values: [ 26, 19, 11, 32, 12 ] },
        { name: '25-49', colour: '#44d3a8', values: [ 25, 27, 12, 31, 4 ] },
        { name: '50-64', colour: '#ffcc00', values: [ 21, 34, 13, 28, 5 ] },
        { name: '65+', colour: '#ff8c5a', values: [ 23, 33, 12, 26, 6 ] }
    ];
    var layouts = {
        slide: { w: 234, h: 140, x: 15, y: 22, pw: 211, ph: 88, title: 10, titleY: 13, text: 6, legendY: 132, step: 24 },
        idea: { w: 175, h: 98, x: 14, y: 15, pw: 150, ph: 65, title: 3, titleY: 12, text: 2, legendY: 86, step: 7 }
    };

    function text( x, y, size, anchor, txt )
    {
        return '<text x="' + x + '" y="' + y + '" font-size="' + size + '" text-anchor="' + anchor + '">' + txt + '</text>';
    }

    function rect( x, y, w, h, fill )
    {
        return '<rect x="' + x + '" y="' + y + '" width="' + w + '" height="' + h + '" fill="' + fill + '"/>';
    }

    function draw( svg )
    {
        var l = layouts[svg.getAttribute( 'data-chart' )];
        var bottom = l.y + l.ph;
        var cat = l.pw / categories.length;
        var middle = l.w / 2;
        var out = text( middle, l.titleY, l.title, 'middle', 'Chart Title' );

        for( var v = 0; v <= 40; v += 5 )
        {
            var y = bottom - v / 40 * l.ph;
            out += '<line x1="' + l.x + '" x2="' + ( l.x + l.pw ) + '" y1="' + y + '" y2="' + y + '"/>';
            out += text( l.x - l.text * 0.8, y + l.text / 3, l.text, 'end', v );
        }
        categories.forEach( function( name, c )
        {
            var centre = l.x + cat * ( c + 0.5 );
            series.forEach( function( s, i )
            {
                var h = s.values[c] / 40 * l.ph;
                out += rect( centre + cat * ( ( i - 2 ) * 0.181 + 0.015 ), bottom - h, cat * 0.151, h, s.colour );
            });
            out += text( centre, bottom + l.text * 1.5, l.text, 'middle', name );
        });
        series.forEach( function( s, i )
        {
            var x = middle + ( i - 1.8 ) * l.step;
            out += rect( x, l.legendY - l.text * 0.6, l.text * 0.6, l.text * 0.6, s.colour );
            out += text( x + l.text * 0.8, l.legendY, l.text, 'start', s.name );
        });
        svg.setAttribute( 'viewBox', '0 0 ' + l.w + ' ' + l.h );
        svg.innerHTML = out;
    }

    document.querySelectorAll( '[data-chart]' ).forEach( draw );
})();
```
